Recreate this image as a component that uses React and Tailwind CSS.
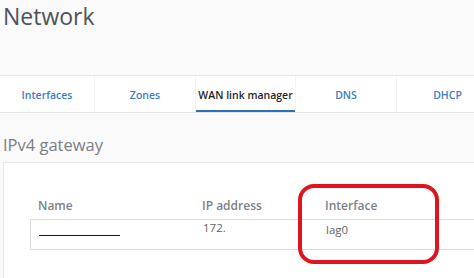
import React from 'react';

const tabs = [
  { label: 'Interfaces', width: 'w-[94px]' },
  { label: 'Zones', width: 'w-[101px]' },
  { label: 'WAN link manager', width: 'w-[100px]', active: true },
  { label: 'DNS', width: 'w-[101px]' },
  { label: 'DHCP', width: 'w-[102px]' },
];

export default function App() {
  return (
    <div className="relative w-[474px] h-[278px] overflow-hidden bg-[#fafafa] font-['Open_Sans',sans-serif]">
      {/* Page header */}
      <div className="h-[76px] pl-[3px] border-b border-[#e6e6e6]">
        <h1 className="text-[23px] leading-[32px] text-[#4d5358] font-normal">Network</h1>
      </div>

      {/* Tabs */}
      <div className="flex h-[37px] bg-white border-b border-[#e3e3e3]">
        {tabs.map((tab, i) => (
          <div
            key={tab.label}
            className={`relative shrink-0 ${tab.width} flex items-center justify-center pt-[4px] text-[10.5px] font-semibold ${
              i > 0 ? 'border-l border-[#f3f3f3]' : ''
            } ${tab.active ? 'text-[#1f1f1f]' : 'text-[#3b7dc0]'}`}
          >
            {tab.label}
            {tab.active && <div className="absolute left-0 right-0 bottom-0 h-[2px] bg-[#2a72b5]" />}
          </div>
        ))}
      </div>

      {/* Section */}
      <div className="pl-[3px]">
        <h2 className="pt-[20px] text-[16.5px] leading-[24px] text-[#7a7f84] font-normal">IPv4 gateway</h2>

        <div className="mt-[5px] bg-white border-l border-t border-[#e6e6e6] pl-[26px] pt-[31px] h-[120px]">
          <div className="flex pl-[8px] h-[25px] pb-[2px] items-center text-[12px] font-semibold text-[#7c8187]">
            <div className="w-[164px]">Name</div>
            <div className="w-[123px]">IP address</div>
            <div>Interface</div>
          </div>
          <div className="flex pl-[8px] h-[31px] border border-r-0 border-[#dcdcdc] text-[11.5px] leading-[14px] text-[#5f6368]">
            <div className="w-[164px] flex items-center">
              <div className="mt-[2px] w-[81px] h-[1.5px] bg-[#1a1a1a]" />
            </div>
            <div className="w-[123px] pt-[1px]">172.</div>
            <div className="pt-[3px]">lag0</div>
          </div>
        </div>
      </div>

      {/* Highlight */}
      <div className="absolute left-[298px] top-[184px] w-[141px] h-[80px] border-[4px] border-[#e0141f] rounded-[16px]" />
    </div>
  );
}
